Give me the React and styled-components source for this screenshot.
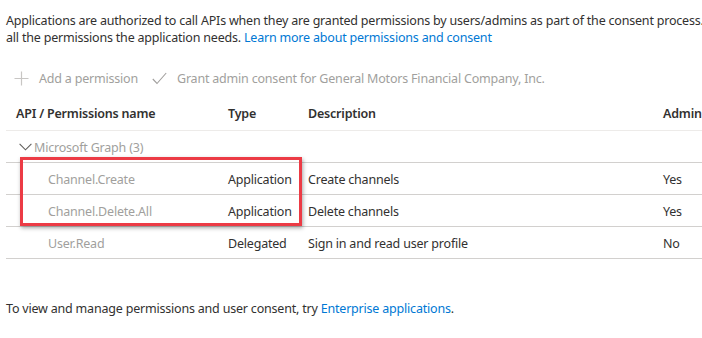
import React from "react";
import styled, { createGlobalStyle } from "styled-components";

const GlobalStyle = createGlobalStyle`
    html, body {
        margin: 0;
        padding: 0;
        background: #fff;
        overflow: hidden;
    }
    body {
        font-family: 'Segoe UI', 'Noto Sans', 'Open Sans', sans-serif;
        font-size: 12.5px;
        letter-spacing: -0.2px;
        color: #323130;
    }
`

const Page = styled.div`
    width: 702px;
    height: 338px;
    padding: 12px 0 0 6px;
    box-sizing: border-box;
    overflow: hidden;
`

const Intro = styled.p`
    margin: 0;
    width: 760px;
    line-height: 17px;
    white-space: nowrap;
`

const Link = styled.a`
    color: #0078d4;
    text-decoration: none;
    cursor: pointer;
`

const Toolbar = styled.div`
    display: flex;
    align-items: center;
    height: 36px;
    margin-top: 14px;
    gap: 14px;
`

const ToolButton = styled.button`
    display: flex;
    align-items: center;
    gap: 10px;
    padding: 0 0 0 ${p => p.$first ? 8 : 0}px;
    border: 0;
    background: transparent;
    color: #a19f9d;
    font: inherit;
    letter-spacing: inherit;
    white-space: nowrap;
    cursor: default;

    svg {
        flex: none;
    }
`

const TableWrap = styled.div`
    position: relative;
    width: 760px;
`

const Grid = styled.div`
    display: grid;
    grid-template-columns: 212px 80px 355px 113px;
`

const HeaderCell = styled.div`
    height: 34px;
    display: flex;
    align-items: center;
    padding-left: 10px;
    font-weight: 600;
    color: #323130;
    border-bottom: 1px solid #edebe9;
    white-space: nowrap;
`

const Cell = styled.div`
    height: 30px;
    padding-top: 1px;
    display: flex;
    align-items: center;
    padding-left: ${p => p.$indent ?? 10}px;
    color: ${p => p.$muted ? "#a19f9d" : "#323130"};
    border-bottom: 1px solid #d2d0ce;
    white-space: nowrap;
`

const GroupCell = styled.div`
    grid-column: 1 / -1;
    height: 30px;
    padding-top: 1px;
    display: flex;
    align-items: center;
    gap: 2px;
    padding-left: 13px;
    color: #a19f9d;
    border-bottom: 1px solid #d2d0ce;
`

const Highlight = styled.div`
    position: absolute;
    left: 14px;
    top: 61px;
    width: 282px;
    height: 69px;
    box-sizing: border-box;
    border: 3px solid #ec3b45;
    box-shadow: 1px 2px 4px rgba(0, 0, 0, 0.35);
    pointer-events: none;
`

const Footer = styled.p`
    margin: 41px 0 0 0;
    line-height: 17px;
`

const PlusIcon = () => (
    <svg width="15" height="15" viewBox="0 0 15 15">
        <path d="M7.5 0.5v14M0.5 7.5h14" stroke="#c8c6c4" strokeWidth="1.2" fill="none" />
    </svg>
)

const CheckIcon = () => (
    <svg width="15" height="13" viewBox="0 0 15 13">
        <path d="M0.8 7l4.2 4.5L14.2 1" stroke="#a19f9d" strokeWidth="1.1" fill="none" />
    </svg>
)

const Chevron = () => (
    <svg width="13" height="8" viewBox="0 0 13 8">
        <path d="M0.6 0.8l5.9 6 5.9-6" stroke="#605e5c" strokeWidth="1.1" fill="none" />
    </svg>
)

const permissions = [
    { name: "Channel.Create", type: "Application", description: "Create channels", admin: "Yes" },
    { name: "Channel.Delete.All", type: "Application", description: "Delete channels", admin: "Yes" },
    { name: "User.Read", type: "Delegated", description: "Sign in and read user profile", admin: "No" },
]

export default function App() {
    return (
        <>
            <GlobalStyle />
            <Page>
                <Intro>
                    Applications are authorized to call APIs when they are granted permissions by users/admins as part of the consent process. The list of configured permissions should include
                    <br />
                    all the permissions the application needs. <Link>Learn more about permissions and consent</Link>
                </Intro>

                <Toolbar>
                    <ToolButton $first>
                        <PlusIcon />
                        Add a permission
                    </ToolButton>
                    <ToolButton>
                        <CheckIcon />
                        Grant admin consent for General Motors Financial Company, Inc.
                    </ToolButton>
                </Toolbar>

                <TableWrap>
                    <Grid>
                        <HeaderCell>API / Permissions name</HeaderCell>
                        <HeaderCell>Type</HeaderCell>
                        <HeaderCell>Description</HeaderCell>
                        <HeaderCell>Admin consent required</HeaderCell>

                        <GroupCell>
                            <Chevron />
                            Microsoft Graph (3)
                        </GroupCell>

                        {permissions.map(p => (
                            <React.Fragment key={p.name}>
                                <Cell $indent={42} $muted>{p.name}</Cell>
                                <Cell>{p.type}</Cell>
                                <Cell>{p.description}</Cell>
                                <Cell>{p.admin}</Cell>
                            </React.Fragment>
                        ))}
                    </Grid>
                    <Highlight />
                </TableWrap>

                <Footer>
                    To view and manage permissions and user consent, try <Link>Enterprise applications</Link>.
                </Footer>
            </Page>
        </>
    );
}
